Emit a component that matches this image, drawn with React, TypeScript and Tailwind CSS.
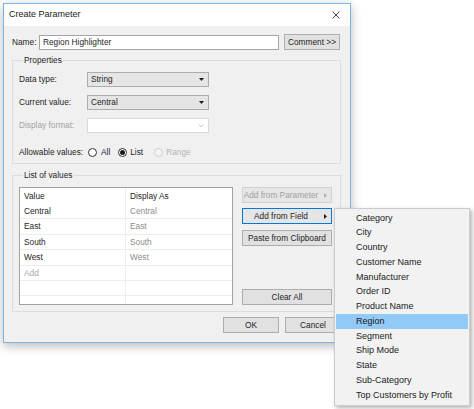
import React from 'react';

const fields = [
  'Category',
  'City',
  'Country',
  'Customer Name',
  'Manufacturer',
  'Order ID',
  'Product Name',
  'Region',
  'Segment',
  'Ship Mode',
  'State',
  'Sub-Category',
  'Top Customers by Profit',
];

const values = [
  { value: 'Central', display: 'Central' },
  { value: 'East', display: 'East' },
  { value: 'South', display: 'South' },
  { value: 'West', display: 'West' },
];

function DownArrow() {
  return (
    <svg width="5" height="3" viewBox="0 0 5 3" className="shrink-0">
      <path d="M0 0 L5 0 L2.5 3 Z" fill="#1a1a1a" />
    </svg>
  );
}

function SubArrow({ muted }: { muted?: boolean }) {
  return (
    <svg width="3" height="5" viewBox="0 0 3 5" className="shrink-0">
      <path d="M0 0 L3 2.5 L0 5 Z" fill={muted ? '#b0b0b0' : '#1a1a1a'} />
    </svg>
  );
}

function Select({ value }: { value: string }) {
  return (
    <div className="w-[122px] h-[15px] bg-[#e5e5e5] border border-[#acacac] flex items-center justify-between pl-[3px] pr-[4px]">
      <span>{value}</span>
      <DownArrow />
    </div>
  );
}

function Radio({ checked, disabled }: { checked?: boolean; disabled?: boolean }) {
  return (
    <span
      className={
        disabled
          ? 'w-[9px] h-[9px] rounded-full border border-[#cfcfcf] bg-[#f4f4f4] flex items-center justify-center shrink-0'
          : 'w-[9px] h-[9px] rounded-full border border-[#333333] bg-white flex items-center justify-center shrink-0'
      }
    >
      {checked && <span className="w-[5px] h-[5px] rounded-full bg-[#1a1a1a]" />}
    </span>
  );
}

function Button({ children, className = '' }: { children: React.ReactNode; className?: string }) {
  return (
    <div
      className={`h-[16px] bg-[#e1e1e1] border border-[#adadad] flex items-center justify-center ${className}`}
    >
      {children}
    </div>
  );
}

function Dialog() {
  return (
    <div className="w-[348px] h-[340px] border border-[#7fb2e5] bg-[#f0f0f0] shadow-[0_3px_10px_rgba(0,0,0,0.28)] flex flex-col">
      <div className="h-[22px] shrink-0 bg-white flex items-center justify-between pl-[5px] pr-[10px]">
        <span className="text-[9px] text-[#222222]">Create Parameter</span>
        <svg width="8" height="8" viewBox="0 0 8 8">
          <path d="M0.5 0.5 L7.5 7.5 M7.5 0.5 L0.5 7.5" stroke="#333333" strokeWidth="0.9" />
        </svg>
      </div>

      <div className="flex-1 flex flex-col pl-[8px] pr-[9px] pt-[8px]">
        <div className="h-[16px] flex items-center">
          <span className="w-[27px]">Name:</span>
          <div className="w-[240px] h-[15px] bg-white border border-[#a5a5a5] flex items-center pl-[3px]">
            Region Highlighter
          </div>
          <Button className="ml-[5px] w-[56px]">Comment &gt;&gt;</Button>
        </div>

        <fieldset className="mt-[5px] border border-[#dcdcdc] pl-[6px] pt-[7px] pb-[3px]">
          <legend className="ml-[4px] px-[1px] leading-[10px]">Properties</legend>
          <div className="flex flex-col">
            <div className="h-[15px] flex items-center">
              <span className="w-[68px]">Data type:</span>
              <Select value="String" />
            </div>
            <div className="h-[15px] mt-[8px] flex items-center">
              <span className="w-[68px]">Current value:</span>
              <Select value="Central" />
            </div>
            <div className="h-[15px] mt-[8px] flex items-center">
              <span className="w-[68px] text-[#a3a3a3]">Display format:</span>
              <div className="w-[122px] h-[15px] bg-white border border-[#dadada] flex items-center justify-end pr-[4px]">
                <svg width="6" height="4" viewBox="0 0 6 4">
                  <path d="M0.5 0.5 L3 3 L5.5 0.5" stroke="#bdbdbd" strokeWidth="0.8" fill="none" />
                </svg>
              </div>
            </div>
            <div className="h-[15px] mt-[12px] flex items-center">
              <span className="w-[68px]">Allowable values:</span>
              <span className="ml-[1px]"><Radio /></span>
              <span className="ml-[4px]">All</span>
              <span className="ml-[8px]"><Radio checked /></span>
              <span className="ml-[3px]">List</span>
              <span className="ml-[11px]"><Radio disabled /></span>
              <span className="ml-[3px] text-[#b5b5b5]">Range</span>
            </div>
          </div>
        </fieldset>

        <fieldset className="mt-[6px] border border-[#dcdcdc] pl-[6px] pr-[7px] pt-[7px] pb-[6px]">
          <legend className="ml-[4px] px-[1px] leading-[10px]">List of values</legend>
          <div className="flex">
            <div className="w-[214px] h-[118px] bg-white border border-[#a0a0a0] overflow-hidden">
              <div className="grid grid-cols-[106px_1fr] h-[16px] items-center">
                <span className="pl-[4px] border-r border-[#eeeeee] h-full flex items-center">Value</span>
                <span className="pl-[4px]">Display As</span>
              </div>
              {values.map((v) => (
                <div key={v.value} className="grid grid-cols-[106px_1fr] h-[15.4px] border-b border-[#ececec]">
                  <span className="pl-[4px] border-r border-[#eeeeee] flex items-center">{v.value}</span>
                  <span className="pl-[4px] flex items-center text-[#8c8c8c]">{v.display}</span>
                </div>
              ))}
              <div className="grid grid-cols-[106px_1fr] h-[15.4px] border-b border-[#ececec]">
                <span className="pl-[4px] border-r border-[#eeeeee] flex items-center text-[#a8a8a8]">Add</span>
                <span />
              </div>
              {[0, 1].map((i) => (
                <div key={i} className="grid grid-cols-[106px_1fr] h-[15.4px] border-b border-[#ececec]">
                  <span className="border-r border-[#eeeeee]" />
                  <span />
                </div>
              ))}
            </div>

            <div className="ml-[9px] w-[90px] flex flex-col">
              <div className="h-[16px] bg-[#e6e6e6] border border-[#d0d0d0] flex items-center text-[#a0a0a0]">
                <span className="flex-1 text-center">Add from Parameter</span>
                <span className="w-[12px] flex justify-center"><SubArrow muted /></span>
              </div>
              <div className="mt-[5px] h-[16px] bg-[#e5e5e5] border border-[#0078d7] flex items-center">
                <span className="flex-1 text-center">Add from Field</span>
                <span className="w-[12px] flex justify-center"><SubArrow /></span>
              </div>
              <Button className="mt-[6px]">Paste from Clipboard</Button>
              <Button className="mt-auto">Clear All</Button>
            </div>
          </div>
        </fieldset>

        <div className="mt-[5px] flex justify-end">
          <Button className="w-[56px]">OK</Button>
          <Button className="ml-[6px] w-[56px]">Cancel</Button>
        </div>
      </div>
    </div>
  );
}

function FieldMenu() {
  return (
    <div className="absolute left-[334px] top-[208px] w-[136px] bg-[#f2f2f2] border border-[#cccccc] shadow-[2px_2px_4px_rgba(0,0,0,0.3)] py-[2px] text-[9px] text-[#1a1a1a]">
      {fields.map((f) => (
        <div
          key={f}
          className={
            f === 'Region'
              ? 'h-[14.75px] mx-[1px] pl-[20px] flex items-center bg-[#91c9f7]'
              : 'h-[14.75px] mx-[1px] pl-[20px] flex items-center'
          }
        >
          {f}
        </div>
      ))}
    </div>
  );
}

export default function App() {
  return (
    <div className="relative w-[474px] h-[409px] bg-white overflow-hidden font-['Liberation_Sans',Arial,sans-serif] text-[8.3px] text-[#1e1e1e]">
      <div className="pl-[3px] pt-[3px]">
        <Dialog />
      </div>
      <FieldMenu />
    </div>
  );
}
